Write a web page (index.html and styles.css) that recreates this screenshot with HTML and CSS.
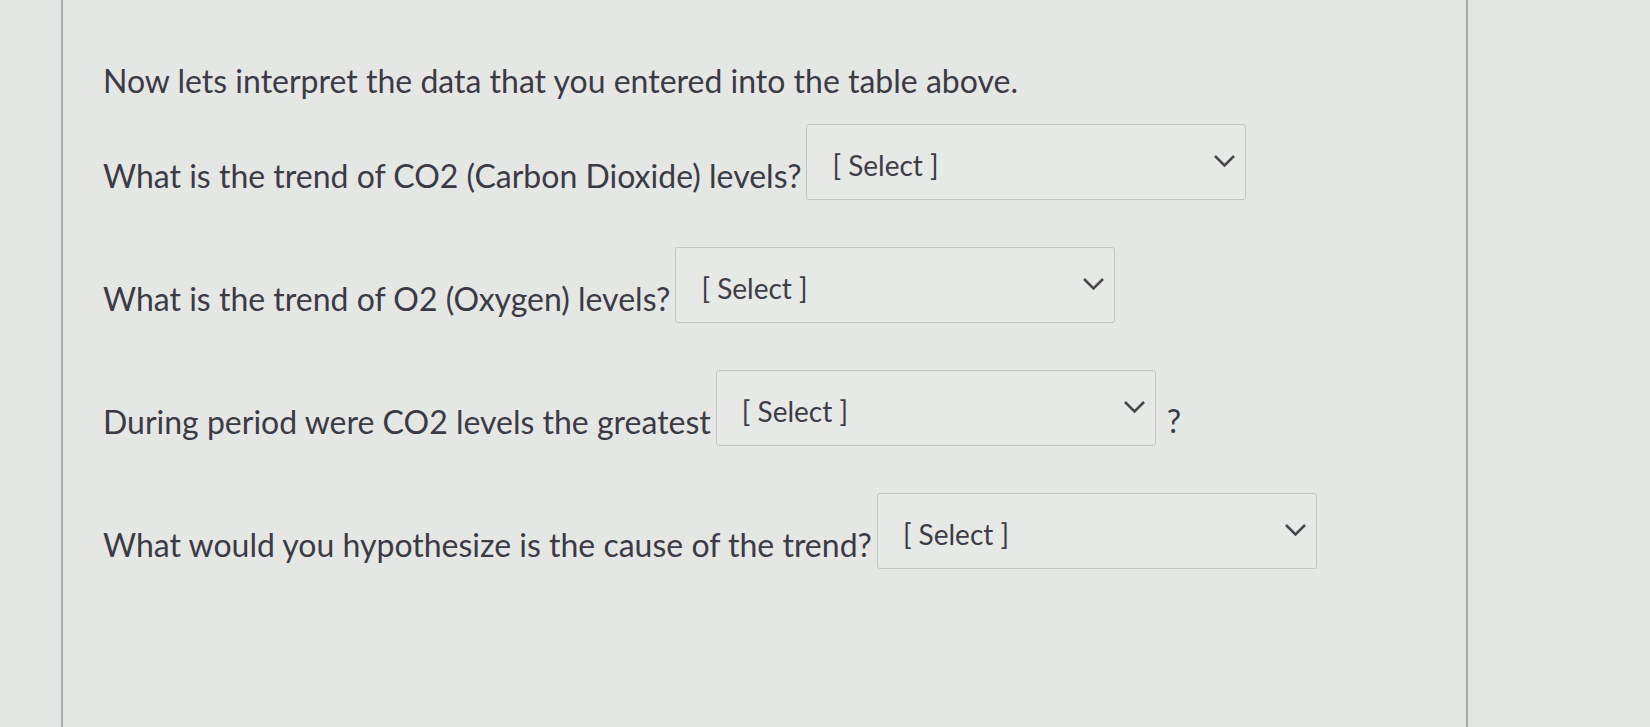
FILE: index.html
```html
<!DOCTYPE html>
<html lang="en">
<head>
    <meta charset="UTF-8">
    <meta name="viewport" content="width=device-width, initial-scale=1.0">
    <title>Quiz - Interpret the data</title>
    <link rel="stylesheet" href="styles.css">
</head>
<body>
    <div class="page">
        <aside class="sidebar"></aside>
        <main class="panel">
            <p class="intro">Now lets interpret the data that you entered into the table above.</p>

            <div class="question">
                <span class="label">What is the trend of CO2 (Carbon Dioxide) levels?</span>
                <div class="select">
                    <span>[ Select ]</span>
                    <svg class="chevron" viewBox="0 0 23 14"><path d="M2 2 L11.5 11.5 L21 2"/></svg>
                </div>
            </div>

            <div class="question">
                <span class="label">What is the trend of O2 (Oxygen) levels?</span>
                <div class="select">
                    <span>[ Select ]</span>
                    <svg class="chevron" viewBox="0 0 23 14"><path d="M2 2 L11.5 11.5 L21 2"/></svg>
                </div>
            </div>

            <div class="question">
                <span class="label">During period were CO2 levels the greatest</span>
                <div class="select">
                    <span>[ Select ]</span>
                    <svg class="chevron" viewBox="0 0 23 14"><path d="M2 2 L11.5 11.5 L21 2"/></svg>
                </div>
                <span class="tail">?</span>
            </div>

            <div class="question">
                <span class="label">What would you hypothesize is the cause of the trend?</span>
                <div class="select">
                    <span>[ Select ]</span>
                    <svg class="chevron" viewBox="0 0 23 14"><path d="M2 2 L11.5 11.5 L21 2"/></svg>
                </div>
            </div>
        </main>
    </div>
</body>
</html>
```

FILE: styles.css
```css
* {
    margin: 0;
    padding: 0;
    box-sizing: border-box;
}
body {
    background-color: #e3e5e3;
    color: #3c3a44;
    font-family: Lato, "Open Sans", sans-serif;
    height: 727px;
    overflow: hidden;
}
.page {
    display: flex;
    height: 100%;
}
.sidebar {
    width: 63px;
    border-right: 2px solid #a9abb0;
    background-color: #e3e5e3;
}
.panel {
    width: 1405px;
    border-right: 2px solid #a9abab;
    background-color: #e5e7e5;
    padding: 62px 0 0 40px;
}
.intro {
    font-size: 32px;
    line-height: 38px;
    margin-bottom: 24px;
}
.question {
    display: flex;
    align-items: center;
    margin-bottom: 47px;
    font-size: 32px;
}
.label {
    margin-top: 26px;
    margin-right: 5px;
    white-space: nowrap;
}
.select {
    width: 440px;
    height: 76px;
    border: 1px solid #c4c6c5;
    border-radius: 3px;
    background-color: #e7e9e7;
    display: flex;
    align-items: center;
    justify-content: space-between;
    padding: 0 9px 0 25px;
    font-size: 28px;
    color: #3e3c46;
}
.select span {
    margin-top: 6px;
}
.chevron {
    width: 23px;
    height: 14px;
    fill: none;
    stroke: #48474e;
    stroke-width: 2.6;
    margin-bottom: 2px;
}
.tail {
    margin-left: 11px;
    margin-top: 24px;
}
```
